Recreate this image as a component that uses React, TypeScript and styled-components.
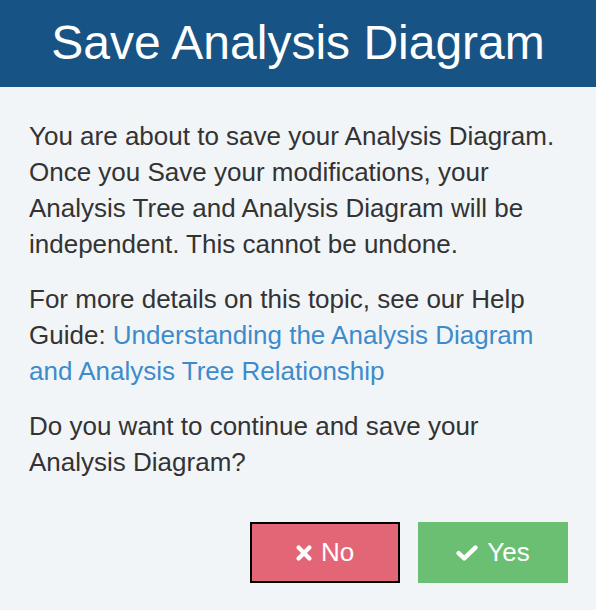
import styled, { createGlobalStyle } from "styled-components";

const GlobalStyle = createGlobalStyle`
  html, body {
    margin: 0;
    padding: 0;
    background: #f2f5f8;
  }
  body {
    font-family: "Liberation Sans", Arial, sans-serif;
  }
`;

const Modal = styled.div`
  width: 596px;
  height: 610px;
  background: #f2f5f8;
  display: flex;
  flex-direction: column;
`;

const Header = styled.header`
  height: 87px;
  background: #175384;
  display: flex;
  justify-content: center;
  align-items: center;
`;

const Title = styled.h1`
  margin: 0;
  color: #fff;
  font-size: 48px;
  font-weight: 400;
  line-height: 1;
  padding-bottom: 2px;
`;

const Body = styled.div`
  padding: 31px 29px 0;
  color: #333;
  font-size: 26px;
  line-height: 36px;
`;

const Para = styled.p`
  margin: 0 0 19px;
`;

const HelpLink = styled.a`
  color: #3d8bcb;
  text-decoration: none;
`;

const Footer = styled.div`
  display: flex;
  justify-content: flex-end;
  gap: 18px;
  padding: 23px 28px 0;
`;

const Button = styled.button<{ $tone: "no" | "yes"; $focused?: boolean }>`
  width: 150px;
  height: 61px;
  display: flex;
  align-items: center;
  justify-content: center;
  gap: 9px;
  padding: 0;
  border: 2px solid ${(p) => (p.$focused ? "#000" : "transparent")};
  border-radius: 0;
  background: ${(p) => (p.$tone === "no" ? "#e36677" : "#6bbf72")};
  color: #fff;
  font-family: "Liberation Sans", Arial, sans-serif;
  font-size: 26px;
  cursor: pointer;
  svg {
    display: block;
    margin-top: 1px;
  }
`;

const TimesIcon = () => (
  <svg width="16" height="16" viewBox="0 0 16 16" fill="none" stroke="#fff" strokeWidth="4.2" strokeLinecap="round">
    <path d="M2.6 2.6 L13.4 13.4 M13.4 2.6 L2.6 13.4" />
  </svg>
);

const CheckIcon = () => (
  <svg width="22" height="16" viewBox="0 0 22 16" fill="none" stroke="#fff" strokeWidth="4.4" strokeLinecap="round" strokeLinejoin="round">
    <path d="M2.6 8.2 L8.2 13.4 L19.4 2.6" />
  </svg>
);

function App() {
  return (
    <Modal>
      <GlobalStyle />
      <Header>
        <Title>Save Analysis Diagram</Title>
      </Header>
      <Body>
        <Para>
          You are about to save your Analysis Diagram. Once you Save your modifications, your
          Analysis Tree and Analysis Diagram will be independent. This cannot be undone.
        </Para>
        <Para>
          For more details on this topic, see our Help Guide:{" "}
          <HelpLink href="#">Understanding the Analysis Diagram and Analysis Tree Relationship</HelpLink>
        </Para>
        <Para>Do you want to continue and save your Analysis Diagram?</Para>
      </Body>
      <Footer>
        <Button $tone="no" $focused>
          <TimesIcon />
          No
        </Button>
        <Button $tone="yes">
          <CheckIcon />
          Yes
        </Button>
      </Footer>
    </Modal>
  );
}

export default App;
